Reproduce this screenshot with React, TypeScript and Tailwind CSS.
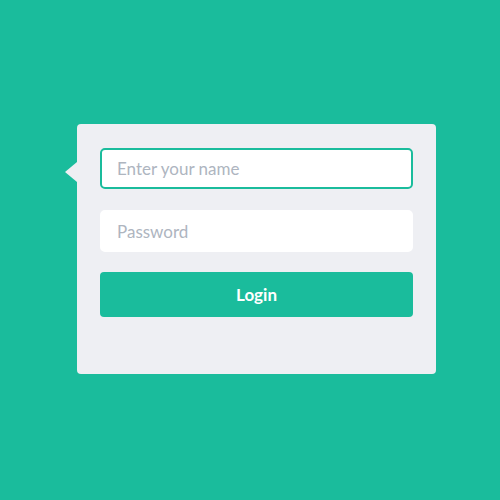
export default function App() {
  return (
    <div className="h-[500px] w-[500px] bg-[#1abc9c] pl-[77px] pt-[124px] font-['Lato','Open_Sans',sans-serif]">
      <div className="relative w-[359px] h-[250px] rounded-[4px] bg-[#eeeff3] px-[23px] pt-[24px]">
        {/* speech-bubble pointer on the left edge */}
        <span className="absolute left-[-12px] top-[38px] h-0 w-0 border-y-[10px] border-r-[12px] border-y-transparent border-r-[#eeeff3]" />
        <div className="flex w-[313px] flex-col">
          <input
            type="text"
            placeholder="Enter your name"
            className="h-[41px] rounded-[5px] border-2 border-[#1abc9c] bg-white px-[15px] text-[17px] text-[#555] outline-none placeholder:text-[#aeb5bf]"
          />
          <input
            type="password"
            placeholder="Password"
            className="mt-[21px] h-[42px] rounded-[5px] border-2 border-white bg-white px-[15px] text-[17px] text-[#555] outline-none placeholder:text-[#aeb5bf]"
          />
          <button
            type="button"
            className="mt-[20px] h-[45px] rounded-[4px] bg-[#1abc9c] text-[17px] font-bold text-white"
          >
            Login
          </button>
        </div>
      </div>
    </div>
  );
}
